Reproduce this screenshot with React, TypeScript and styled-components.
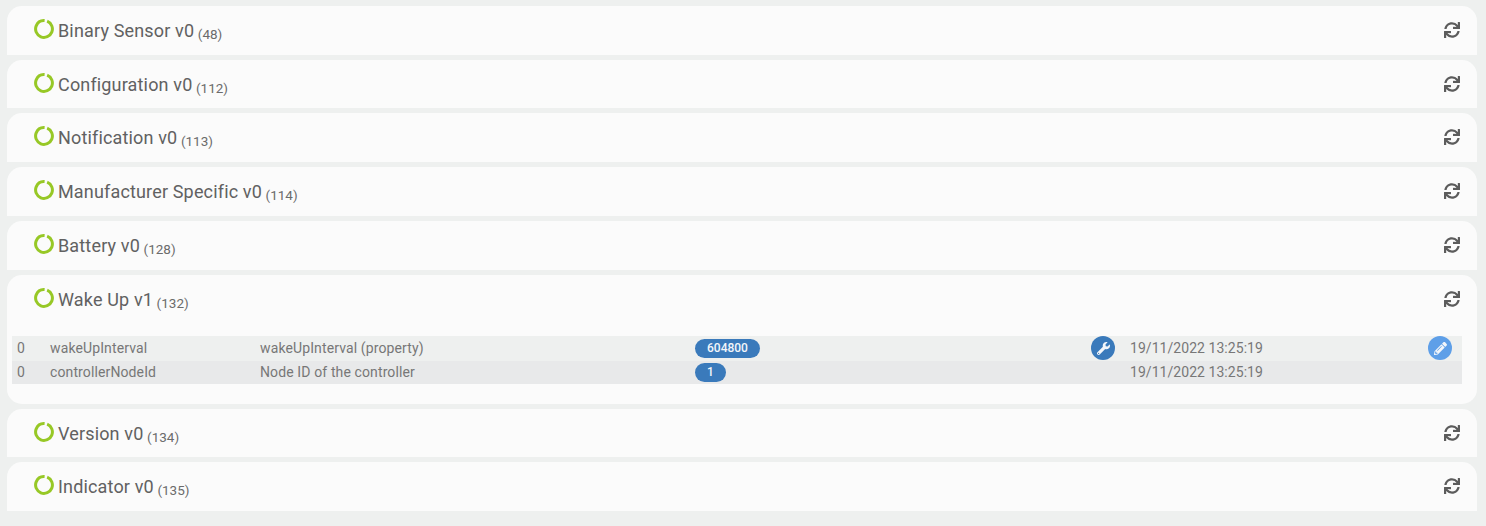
import React from "react";
import styled, { createGlobalStyle } from "styled-components";
import { FaSync, FaWrench, FaPencilAlt } from "react-icons/fa";

const Global = createGlobalStyle`
  html, body { margin: 0; padding: 0; background: #eef0ef; height: 100%; overflow: hidden; }
  body { font-family: Roboto, "Liberation Sans", sans-serif; }
`;

const Page = styled.div`
  display: flex;
  flex-direction: column;
  gap: 5px;
  padding: 6px 9px 0 7px;
`;

const Card = styled.section<{ $open?: boolean }>`
  background: #fbfbfb;
  border-radius: ${(p) => (p.$open ? "15px" : "15px 15px 0 0")};
  padding-bottom: ${(p) => (p.$open ? "20px" : "0")};
`;

const Header = styled.header`
  height: 48.72px;
  box-sizing: border-box;
  display: flex;
  align-items: flex-start;
  padding: 13px 17px 0 27px;
  color: #616161;
`;

const Ring = styled.svg`
  width: 20px;
  height: 20px;
  flex: none;
  margin-right: 4px;
`;

const Title = styled.span`
  font-size: 18px;
  line-height: 23px;
  letter-spacing: 0.16px;
  white-space: nowrap;
`;

const Count = styled.small`
  font-size: 13.5px;
  letter-spacing: 0;
  margin-left: 3.5px;
  position: relative;
  top: 2px;
  color: #6b6b6b;
`;

const Reload = styled.span`
  margin-left: auto;
  display: flex;
  margin-top: 3px;
  color: #5c5c5c;
  font-size: 16px;
`;

const Table = styled.div`
  margin: 12.4px 15px 0 5px;
  color: #777;
  font-size: 14px;
`;

const Row = styled.div<{ $alt?: boolean }>`
  display: grid;
  grid-template-columns: 38px 210px 435px 396px 39px 298px 1fr;
  align-items: center;
  height: ${(p) => (p.$alt ? "23px" : "25px")};
  background: ${(p) => (p.$alt ? "#e8e9ea" : "#eef0ef")};
  white-space: nowrap;
`;

const Index = styled.span`
  padding-left: 5px;
`;

const Text = styled.span`
  letter-spacing: 0.12px;
`;

const DateText = styled.span`
  letter-spacing: 0.05px;
`;

const Badge = styled.span`
  justify-self: start;
  background: #3a7abb;
  color: #f3f6fa;
  border-radius: 10px;
  font-size: 12px;
  font-weight: 500;
  line-height: 19px;
  padding: 0 12px;
`;

const RoundButton = styled.span<{ $light?: boolean }>`
  width: 24px;
  height: 24px;
  border-radius: 50%;
  background: ${(p) => (p.$light ? "#5e9fe8" : "#3a7abb")};
  color: #f3f6fa;
  display: flex;
  align-items: center;
  justify-content: center;
  font-size: 13px;
`;

const Spinner = () => (
  <Ring viewBox="0 0 20 20">
    <circle cx="10" cy="10" r="8.4" fill="none" stroke="#97c826" strokeWidth="3" strokeDasharray="49.8 3" transform="rotate(-68 10 10)" />
  </Ring>
);

const Section = ({ name, id, children }: { name: string; id: number; children?: React.ReactNode }) => (
  <Card $open={!!children}>
    <Header>
      <Spinner />
      <Title>
        {name}
        <Count>({id})</Count>
      </Title>
      <Reload>
        <FaSync />
      </Reload>
    </Header>
    {children}
  </Card>
);

export default function App() {
  return (
    <Page>
      <Global />
      <Section name="Binary Sensor v0" id={48} />
      <Section name="Configuration v0" id={112} />
      <Section name="Notification v0" id={113} />
      <Section name="Manufacturer Specific v0" id={114} />
      <Section name="Battery v0" id={128} />
      <Section name="Wake Up v1" id={132}>
        <Table>
          <Row>
            <Index>0</Index>
            <Text>wakeUpInterval</Text>
            <Text>wakeUpInterval (property)</Text>
            <Badge>604800</Badge>
            <RoundButton><FaWrench /></RoundButton>
            <DateText>19/11/2022 13:25:19</DateText>
            <RoundButton $light><FaPencilAlt /></RoundButton>
          </Row>
          <Row $alt>
            <Index>0</Index>
            <Text>controllerNodeId</Text>
            <Text>Node ID of the controller</Text>
            <Badge>1</Badge>
            <span />
            <DateText>19/11/2022 13:25:19</DateText>
            <span />
          </Row>
        </Table>
      </Section>
      <Section name="Version v0" id={134} />
      <Section name="Indicator v0" id={135} />
    </Page>
  );
}
